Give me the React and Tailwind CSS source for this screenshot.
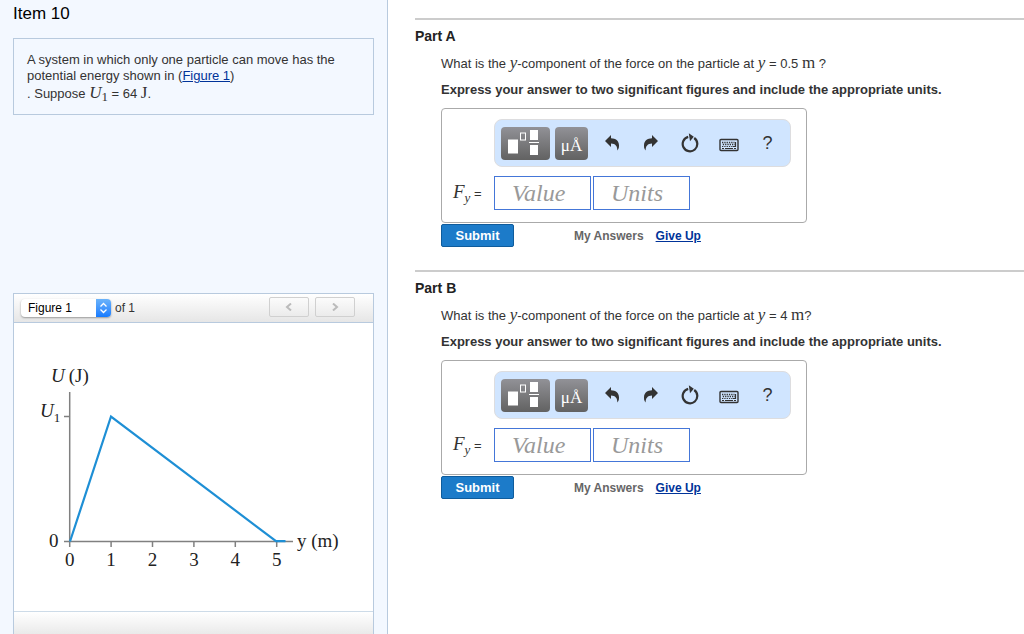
import { useState } from "react";

const parts = [
    { id: "A", at: "0.5", end: " ?" },
    { id: "B", at: "4", end: "?" },
];

const ticks = [0, 1, 2, 3, 4, 5];

const MathVar = ({ children }) => (
    <span className="font-['Liberation_Serif',serif] text-[17px] leading-none italic">{children}</span>
);

const MathUnit = ({ children }) => (
    <span className="font-['Liberation_Serif',serif] text-[17px] leading-none">{children}</span>
);

const TemplatesIcon = () => (
    <svg width="49" height="33" viewBox="0 0 49 33" fill="none">
        <rect x="7" y="12.5" width="10" height="14" fill="#fff" />
        <rect x="19.5" y="6" width="5" height="7" stroke="#fff" />
        <rect x="29" y="3" width="8" height="10" fill="#fff" />
        <rect x="28" y="15" width="10" height="1" fill="#fff" />
        <rect x="29" y="18" width="8" height="10" fill="#fff" />
    </svg>
);

const UndoIcon = () => (
    <svg width="14" height="16" viewBox="0 0 14 16" fill="#333">
        <path d="M0 6 6 0v3.300C11 3.600 14.200 6 14 11c0 2-.6 3.400-1.600 4.500C12.300 11 10.500 8.700 6 8.500v3.500Z" />
    </svg>
);

const RedoIcon = () => (
    <svg width="14" height="16" viewBox="0 0 14 16" fill="#333">
        <path d="M14 6 8 0v3.300C3 3.600-.2 6 0 11c0 2 .6 3.400 1.600 4.500C1.700 11 3.500 8.700 8 8.500v3.500Z" />
    </svg>
);

const ResetIcon = () => (
    <svg width="18" height="20" viewBox="0 0 18 20" fill="none">
        <path d="M13.200 5A7.300 7.300 0 1 1 7.200 3.900" stroke="#333" strokeWidth="2.200" />
        <path d="m7.800.3 5 3.400-3.800 4.500Z" fill="#333" />
    </svg>
);

const KeyboardIcon = () => (
    <svg width="20" height="14" viewBox="0 0 20 14" fill="none" stroke="#333">
        <rect x="1" y="1.500" width="18" height="11" rx="1" strokeWidth="1.400" />
        <path d="M3 4.500h12.500M3.800 6.500h12" strokeDasharray="1.300 1" strokeWidth="1.300" />
        <path d="M3 8.500h11" strokeDasharray="1.300 1" strokeWidth="1.200" />
        <path d="M3 10.500h2M6 10.500h8M15 10.500h2M16.500 4v4.500H14" strokeWidth="1.200" />
    </svg>
);

const Chevron = ({ d }) => (
    <svg width="8" height="8" viewBox="0 0 8 8" fill="none" stroke="#bbb" strokeWidth="2">
        <path d={d} />
    </svg>
);

// U(y): rises to U1 at 1 m, then drops back to zero at 5 m
const EnergyGraph = () => (
    <svg
        width="359"
        height="288"
        viewBox="0 0 359 288"
        fill="none"
        className="font-['Liberation_Serif',serif] text-[19px]"
        role="img"
        aria-label="Potential energy U against position y"
    >
        <g stroke="#808080" strokeWidth="1.5">
            <path d="M55.700 69v149.500M50 218.500h229M50 93.500h5.500" />
            {ticks.map((t) => (
                <path key={t} d={`M${55.7 + t * 41.4} 218v6`} />
            ))}
        </g>
        <path d="M56 218.500 97 93.500 262 218.200h9.500" stroke="#1e8fd5" strokeWidth="2.2" />
        <g fill="#222">
            <text x="37" y="59">
                <tspan fontStyle="italic">U</tspan>
                <tspan dx="4">(J)</tspan>
            </text>
            <text x="26" y="94">
                <tspan fontStyle="italic">U</tspan>
                <tspan fontSize="13" dy="5">1</tspan>
            </text>
            <text x="35" y="224">0</text>
            <text x="283" y="224">y (m)</text>
            {ticks.map((t) => (
                <text key={t} x={55.7 + t * 41.4} y="243" textAnchor="middle">
                    {t}
                </text>
            ))}
        </g>
    </svg>
);

const Toolbar = () => (
    <div className="ml-[52px] flex h-12 w-[297px] items-center gap-[5px] rounded-lg border border-[#dddddf] bg-[#d0e5ff] pr-[3px] pl-1.5">
        <button aria-label="Templates" className="h-[33px] w-[49px] shrink-0 overflow-hidden rounded bg-linear-to-b from-[#929297] to-[#626262]">
            <TemplatesIcon />
        </button>
        <button className="h-[33px] w-[33px] shrink-0 rounded bg-linear-to-b from-[#929297] to-[#626262] pt-1 font-['Liberation_Serif',serif] text-[17px] leading-none text-white">
            μÅ
        </button>
        <div className="flex flex-1 items-center">
            <button aria-label="Undo" className="flex flex-1 justify-center"><UndoIcon /></button>
            <button aria-label="Redo" className="flex flex-1 justify-center"><RedoIcon /></button>
            <button aria-label="Reset" className="flex flex-1 justify-center"><ResetIcon /></button>
            <button aria-label="Keyboard" className="flex flex-1 justify-center pt-1"><KeyboardIcon /></button>
            <button className="flex-1 text-lg leading-5 text-[#333]">?</button>
        </div>
    </div>
);

const Part = ({ id, at, end }) => {
    const [value, setValue] = useState("");
    const [units, setUnits] = useState("");

    return (
        <section className="h-[252px] border-t-2 border-[#ccc] pt-1.5">
            <h2 className="text-sm leading-5 font-bold text-[#222]">Part {id}</h2>
            <div className="pt-2 pl-[26px]">
                <p className="h-5 leading-5">
                    What is the <MathVar>y</MathVar>-component of the force on the particle at{" "}
                    <MathVar>y</MathVar> = {at} <MathUnit>m</MathUnit>{end}
                </p>
                <p className="mt-1.5 leading-5 font-bold">
                    Express your answer to two significant figures and include the appropriate units.
                </p>
                <div className="mt-2 h-[115px] w-[366px] rounded border border-[#aaa] pt-2.5">
                    <Toolbar />
                    <div className="mt-[9px] flex items-center">
                        <div className="w-[52px] pl-[11px] whitespace-nowrap">
                            <span className="font-['Liberation_Serif',serif] text-[19px] leading-none italic">
                                F<sub className="text-[13px]">y</sub>
                            </span>{" "}
                            =
                        </div>
                        <div className="flex gap-0.5">
                            <input
                                type="text"
                                value={value}
                                onChange={(e) => setValue(e.target.value)}
                                placeholder="Value"
                                aria-label={`Part ${id} value`}
                                className="h-[34px] w-[97px] border border-[#4476d8] pl-[17px] font-['Liberation_Serif',serif] text-2xl italic placeholder:text-[#999]"
                            />
                            <input
                                type="text"
                                value={units}
                                onChange={(e) => setUnits(e.target.value)}
                                placeholder="Units"
                                aria-label={`Part ${id} units`}
                                className="h-[34px] w-[97px] border border-[#4476d8] pl-[17px] font-['Liberation_Serif',serif] text-2xl italic placeholder:text-[#999]"
                            />
                        </div>
                    </div>
                </div>
                <div className="mt-px flex items-center text-xs font-bold">
                    <button className="h-[23px] w-[73px] rounded-xs border border-[#0f5c9c] bg-[#1c7bc9] text-[13px] text-white">
                        Submit
                    </button>
                    <span className="ml-[60px] text-[#666]">My Answers</span>
                    <a href="#give-up" className="ml-3 text-[#003399] underline">Give Up</a>
                </div>
            </div>
        </section>
    );
};

const App = () => {
    return (
        <div className="flex min-h-screen bg-white font-['Liberation_Sans',sans-serif] text-[13px] text-[#333]">
            {/* Problem statement and figure */}
            <aside className="flex w-[388px] shrink-0 flex-col border-r border-[#b8cade] bg-[#f3f8ff] px-[13px] pt-0.5">
                <h1 className="text-[17px] leading-6 text-black">Item 10</h1>
                <div className="mt-3 h-[77px] border border-[#b8cade] px-[13px] pt-[13px] leading-4">
                    <p>
                        A system in which only one particle can move has the potential energy shown in (
                        <a href="#figure" className="text-[#003399] underline">Figure 1</a>)
                    </p>
                    <p className="h-4 leading-4">
                        . Suppose{" "}
                        <span className="font-['Liberation_Serif',serif] text-[17px] leading-none">
                            <i>U</i><sub className="text-[13px]">1</sub>
                        </span>{" "}
                        = 64 <MathUnit>J</MathUnit>.
                    </p>
                </div>

                <div id="figure" className="mt-[178px] flex flex-1 flex-col border border-b-0 border-[#b8cade] bg-white">
                    <div className="flex h-[29px] items-center border-b border-[#b8cade] bg-linear-to-b from-white to-[#e6e6e6] pr-[18px] pl-[7px] text-xs">
                        <div className="relative">
                            <select
                                aria-label="Figure"
                                className="h-[18px] w-[90px] appearance-none rounded bg-white pl-[7px] text-xs text-black shadow-[0_1px_2px_#999]"
                            >
                                <option>Figure 1</option>
                            </select>
                            <span className="pointer-events-none absolute top-0 right-0 flex h-[18px] w-[15px] items-center justify-center rounded-r bg-linear-to-b from-[#6bb3fa] to-[#147bff]">
                                <svg width="9" height="12" viewBox="0 0 9 12" fill="none" stroke="#fff" strokeWidth="1.3">
                                    <path d="m1.500 4.500 3-3 3 3M1.500 7.500l3 3 3-3" />
                                </svg>
                            </span>
                        </div>
                        <span className="ml-1 flex-1">of 1</span>
                        <div className="flex gap-1.5 pb-0.5">
                            <button aria-label="Previous figure" className="flex h-5 w-10 items-center justify-center rounded-xs border border-[#d0d0d0]">
                                <Chevron d="M6 .5 2 4l4 3.500" />
                            </button>
                            <button aria-label="Next figure" className="flex h-5 w-10 items-center justify-center rounded-xs border border-[#d0d0d0]">
                                <Chevron d="m2 .5 4 3.500-4 3.500" />
                            </button>
                        </div>
                    </div>
                    <EnergyGraph />
                    <div className="min-h-[23px] flex-1 border-t border-[#cddbe8] bg-linear-to-b from-white to-[#eaeaea]" />
                </div>
            </aside>

            {/* Answer parts */}
            <main className="min-w-0 flex-1 pt-[18px] pl-[27px]">
                {parts.map((part) => (
                    <Part key={part.id} {...part} />
                ))}
            </main>
        </div>
    );
};

export default App;
